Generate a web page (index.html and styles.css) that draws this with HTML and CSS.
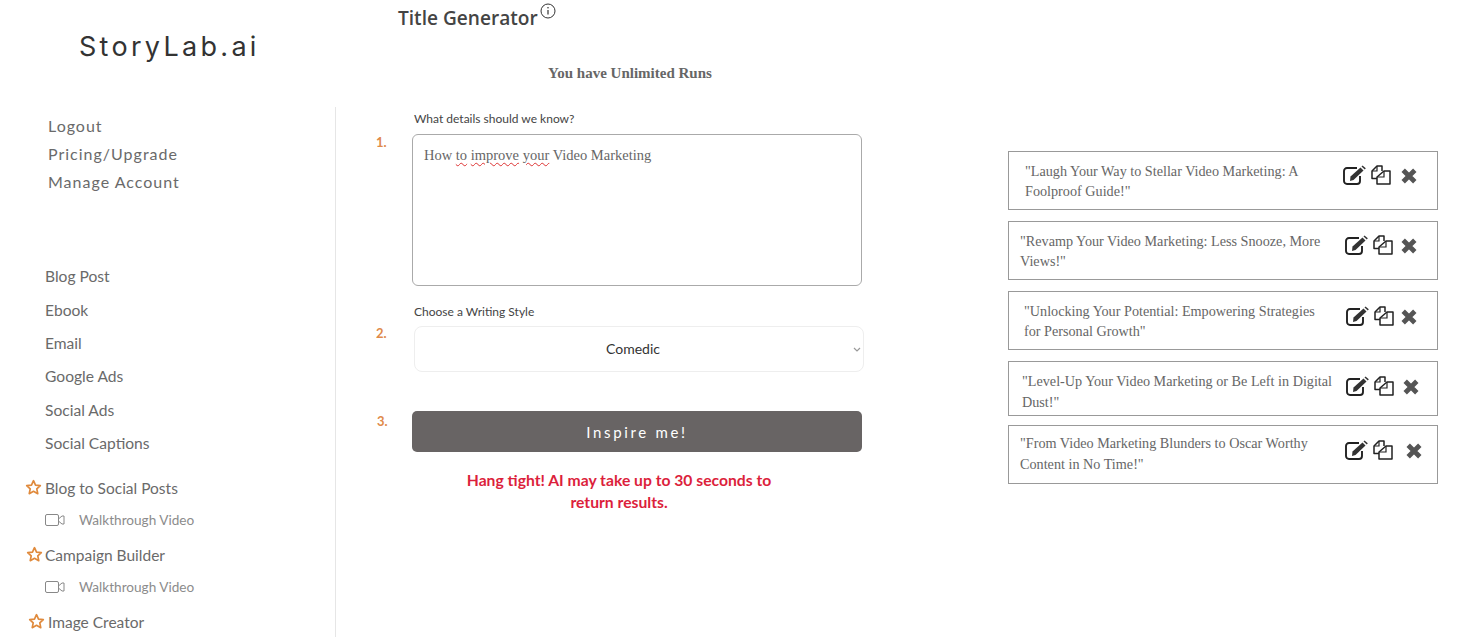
FILE: index.html
```html
<!DOCTYPE html>
<html lang="en">
<head>
<meta charset="utf-8">
<title>Title Generator - StoryLab.ai</title>
<link rel="stylesheet" href="styles.css">
</head>
<body>
<svg class="defs" width="0" height="0" aria-hidden="true">
  <symbol id="star" viewBox="0 0 16 16">
    <path d="M8 1.6l1.900 4.100 4.500.5-3.300 3.100.9 4.500L8 11.600l-4 2.200.9-4.500L1.600 6.200l4.500-.5z" fill="none" stroke="#e08a3c" stroke-width="1.600" stroke-linejoin="round"/>
  </symbol>
  <symbol id="video" viewBox="0 0 20 12">
    <rect x="0.500" y="0.500" width="13" height="11" rx="1.500" fill="none" stroke="#888"/>
    <path d="M14 4.500l3-2.500h2v8h-2l-3-2.500" fill="none" stroke="#888"/>
  </symbol>
  <symbol id="edit" viewBox="0 0 24 20">
    <path d="M17 11v5a3 3 0 0 1-3 3H4a3 3 0 0 1-3-3V6a3 3 0 0 1 3-3h10" fill="none" stroke="#222" stroke-width="1.900"/>
    <path d="M7.500 11.500L17.500 2.500l3 3-10 9.500-3.500 1z" fill="#333"/>
    <path d="M18.500 1.500l1-1 3.300 2.800-1 1.200z" fill="#333"/>
  </symbol>
  <symbol id="copy" viewBox="0 0 20 20">
    <path d="M6 13.500H1V6l5-5h5v5" fill="none" stroke="#222" stroke-width="1.500" stroke-linejoin="round"/>
    <path d="M1 6h5V1" fill="none" stroke="#222" stroke-width="1.200"/>
    <path d="M6 19h13V6h-6l-7 6z" fill="#fff" stroke="#222" stroke-width="1.500" stroke-linejoin="round"/>
    <path d="M6 12h7V6" fill="none" stroke="#222" stroke-width="1.200"/>
  </symbol>
  <symbol id="close" viewBox="0 0 16 16">
    <path d="M2.200 2.200l11.600 11.600M13.800 2.200L2.200 13.800" fill="none" stroke="#555" stroke-width="4.800"/>
  </symbol>
  <symbol id="info" viewBox="0 0 16 16">
    <circle cx="8" cy="8" r="7" fill="none" stroke="#333" stroke-width="1"/>
    <path d="M8 7v4.500" stroke="#333" stroke-width="1.200"/>
    <circle cx="8" cy="4.800" r="0.800" fill="#333"/>
  </symbol>
  <symbol id="chevron" viewBox="0 0 8 5">
    <path d="M1 1l3 3 3-3" fill="none" stroke="#999" stroke-width="1.200"/>
  </symbol>
</svg>

<div class="page">
  <aside class="sidebar">
    <div class="logo">StoryLab.ai</div>
    <nav class="nav">
      <ul class="account">
        <li>Logout</li>
        <li>Pricing/Upgrade</li>
        <li>Manage Account</li>
      </ul>
      <ul class="tools">
        <li>Blog Post</li>
        <li>Ebook</li>
        <li>Email</li>
        <li>Google Ads</li>
        <li>Social Ads</li>
        <li>Social Captions</li>
      </ul>
      <ul class="premium">
        <li class="star-item star-blog"><svg class="star"><use href="#star"/></svg>Blog to Social Posts</li>
        <li class="video-item"><svg class="video"><use href="#video"/></svg>Walkthrough Video</li>
        <li class="star-item star-campaign"><svg class="star"><use href="#star"/></svg>Campaign Builder</li>
        <li class="video-item"><svg class="video"><use href="#video"/></svg>Walkthrough Video</li>
        <li class="star-item star-image"><svg class="star"><use href="#star"/></svg>Image Creator</li>
      </ul>
    </nav>
  </aside>

  <main class="main">
    <header class="heading">
      <h1 class="title">Title Generator</h1>
      <svg class="info"><use href="#info"/></svg>
    </header>
    <p class="runs">You have Unlimited Runs</p>

    <div class="workspace">
      <form class="form">
        <div class="step step-details">
          <span class="num num-1">1.</span>
          <div class="field">
            <label class="label">What details should we know?</label>
            <div class="textarea">How <span class="typo">to</span> <span class="typo">improve</span> <span class="typo">your</span> Video Marketing</div>
          </div>
        </div>
        <div class="step step-style">
          <span class="num num-2">2.</span>
          <div class="field">
            <label class="label">Choose a Writing Style</label>
            <div class="select-wrap">
              <select class="select"><option>Comedic</option></select>
              <svg class="chevron"><use href="#chevron"/></svg>
            </div>
          </div>
        </div>
        <div class="step step-submit">
          <span class="num num-3">3.</span>
          <div class="field">
            <button class="button" type="button">Inspire me!</button>
            <p class="wait">Hang tight! AI may take up to 30 seconds to return results.</p>
          </div>
        </div>
      </form>

      <section class="results">
        <article class="card card-1">
          <p class="card-text">"Laugh Your Way to Stellar Video Marketing: A Foolproof Guide!"</p>
          <div class="icons"><svg class="i-edit"><use href="#edit"/></svg><svg class="i-copy"><use href="#copy"/></svg><svg class="i-close"><use href="#close"/></svg></div>
        </article>
        <article class="card card-2">
          <p class="card-text">"Revamp Your Video Marketing: Less Snooze, More Views!"</p>
          <div class="icons"><svg class="i-edit"><use href="#edit"/></svg><svg class="i-copy"><use href="#copy"/></svg><svg class="i-close"><use href="#close"/></svg></div>
        </article>
        <article class="card card-3">
          <p class="card-text">"Unlocking Your Potential: Empowering Strategies for Personal Growth"</p>
          <div class="icons"><svg class="i-edit"><use href="#edit"/></svg><svg class="i-copy"><use href="#copy"/></svg><svg class="i-close"><use href="#close"/></svg></div>
        </article>
        <article class="card card-4">
          <p class="card-text">"Level-Up Your Video Marketing or Be Left in Digital Dust!"</p>
          <div class="icons"><svg class="i-edit"><use href="#edit"/></svg><svg class="i-copy"><use href="#copy"/></svg><svg class="i-close"><use href="#close"/></svg></div>
        </article>
        <article class="card card-5">
          <p class="card-text">"From Video Marketing Blunders to Oscar Worthy Content in No Time!"</p>
          <div class="icons"><svg class="i-edit"><use href="#edit"/></svg><svg class="i-copy"><use href="#copy"/></svg><svg class="i-close"><use href="#close"/></svg></div>
        </article>
      </section>
    </div>
  </main>
</div>
</body>
</html>
```
FILE: styles.css
```css
* { box-sizing: border-box; }
html, body { margin: 0; height: 100%; background: #fff; overflow: hidden; }
body { font-family: "Lato", sans-serif; color: #666; }
.defs { position: absolute; }
ul { list-style: none; margin: 0; padding: 0; }
p, h1 { margin: 0; }

.page { display: flex; height: 637px; overflow: hidden; }

/* sidebar */
.sidebar { width: 336px; flex: none; display: flex; flex-direction: column; }
.logo {
  height: 109px;
  padding: 29px 0 0 79px;
  font-family: "Inter", sans-serif;
  font-size: 27px;
  line-height: 36px;
  letter-spacing: 3.300px;
  color: #333;
}
.nav { flex: 1; border-right: 1px solid #e6e6e6; }
.account { padding: 5px 0 0 48px; font-size: 16px; letter-spacing: 1px; color: #6a6a6a; }
.account li { height: 28px; line-height: 28px; }
.tools { padding: 64.500px 0 0 45px; font-size: 15.600px; color: #6a6a6a; }
.tools li { height: 33.400px; line-height: 33.400px; }
.premium { padding-top: 8.400px; font-size: 15.500px; color: #6a6a6a; }
.star-item { display: flex; align-items: center; height: 34px; padding: 3px 0 0 25px; }
.star-campaign { padding-left: 26px; }
.star-image { padding-left: 28px; }
.star { width: 17px; height: 17px; flex: none; margin-right: 3px; }
.star-campaign .star { margin-right: 2px; }
.video-item { display: flex; align-items: center; height: 33px; padding-left: 45px; font-size: 13.600px; color: #8c8c8c; }
.video { width: 20px; height: 12px; margin-right: 14px; }

/* main */
.main { flex: 1; min-width: 0; display: flex; flex-direction: column; }
.heading { display: flex; align-items: flex-start; height: 38px; padding: 3px 0 0 62px; }
.title { font-family: "Open Sans", sans-serif; font-size: 19.100px; line-height: 30px; font-weight: 600; color: #444; }
.info { width: 16px; height: 16px; margin-left: 2px; }
.runs {
  width: 460px;
  margin-left: 64px;
  padding-top: 26px;
  height: 70px;
  text-align: center;
  font-family: "Liberation Serif", serif;
  font-size: 15px;
  line-height: 18px;
  font-weight: 700;
  color: #666;
}
.workspace { display: flex; align-items: flex-start; }
.form { width: 672px; flex: none; }
.step { display: flex; }
.num { width: 76px; padding-left: 40px; font-size: 13px; font-weight: 700; color: #e08a4a; line-height: 16px; }
.num-1 { padding-top: 26px; }
.num-2 { padding-top: 23px; }
.num-3 { padding-top: 2px; padding-left: 41px; }
.field { width: 452px; }
.label { display: block; padding: 1px 0 0 2px; height: 26px; font-size: 12px; line-height: 20px; color: #444; }
.textarea {
  width: 450px;
  height: 152px;
  padding: 10px 11px;
  border: 1px solid #aaa;
  border-radius: 6px;
  font-family: "Liberation Serif", serif;
  font-size: 14.500px;
  line-height: 20px;
  color: #666;
}
.typo { text-decoration: underline wavy #d33; text-decoration-thickness: 1px; text-underline-offset: 2px; }
.step-style { padding-top: 16px; }
.step-style .label { height: 24px; padding-top: 0; }
.select-wrap { position: relative; width: 450px; height: 46px; margin-left: 2px; }
.select {
  display: block;
  width: 100%;
  height: 100%;
  padding: 0 12px 2px 0;
  appearance: none;
  border: 1px solid #eee;
  border-radius: 8px;
  background-color: #fff;
  font-family: "Lato", sans-serif;
  font-size: 14px;
  color: #333;
  text-align: center;
  text-align-last: center;
}
.chevron { position: absolute; top: 21px; right: 3px; width: 8px; height: 5px; }
.step-submit { padding-top: 39px; }
.button {
  display: block;
  width: 450px;
  height: 41px;
  border: 0;
  border-radius: 5px;
  background: #686464;
  color: #fff;
  font-family: "Lato", sans-serif;
  font-size: 15px;
  letter-spacing: 2.650px;
}
.wait {
  width: 320px;
  margin: 17px 0 0 47px;
  text-align: center;
  font-size: 15.700px;
  line-height: 22px;
  font-weight: 700;
  color: #dc1f3c;
}

/* results */
.results { width: 430px; flex: none; display: flex; flex-direction: column; gap: 11px; margin-top: 43px; }
.card {
  display: flex;
  height: 59px;
  border: 1px solid #999;
  background: #fff;
}
.card-4 { height: 55px; margin-bottom: -2px; }
.card-text {
  width: 329px;
  flex: none;
  margin: 0 5px 0 0;
  font-family: "Liberation Serif", serif;
  font-size: 14.200px;
  line-height: 20px;
  color: #666;
}
.card-1 .card-text { padding: 9px 0 0 16px; }
.card-2 .card-text { padding: 9px 0 0 11px; }
.card-3 .card-text { padding: 9px 12px 0 15px; }
.card-4 .card-text { padding: 9px 0 0 13px; line-height: 21px; }
.card-5 .card-text { padding: 7px 0 0 11px; line-height: 21px; }
.icons { display: flex; align-items: flex-start; padding-top: 13px; }
.i-edit { width: 24px; height: 20px; flex: none; }
.i-copy { width: 20px; height: 20px; flex: none; margin-left: 4px; }
.i-close { width: 16px; height: 16px; flex: none; margin: 3px 0 0 10px; }
.card-2 .icons { padding-left: 2px; }
.card-2 .i-close { margin-left: 8px; }
.card-3 .icons { padding: 14px 0 0 3px; }
.card-3 .i-close { margin-left: 7px; }
.card-4 .icons { padding: 14px 0 0 3px; }
.card-4 .i-close { margin: 3px 0 0 9px; }
.card-5 .icons { padding: 14px 0 0 2px; }
.card-5 .i-close { margin: 3px 0 0 13px; }
```
